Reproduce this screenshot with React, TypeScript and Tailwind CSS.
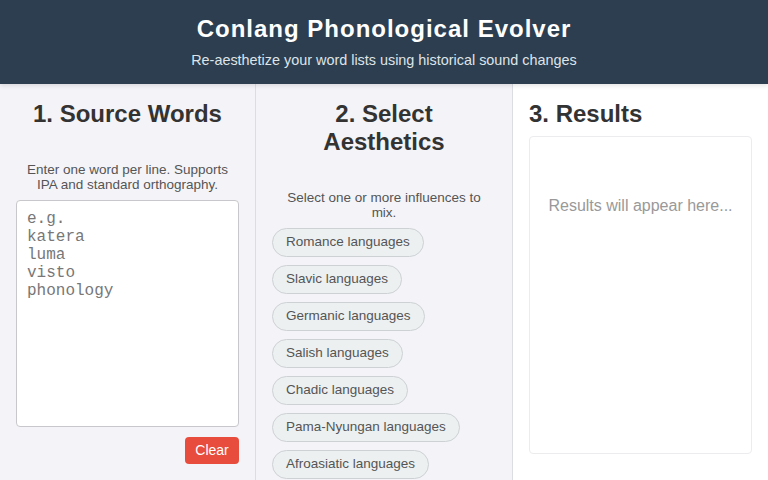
import React, { useState } from 'react';

const influences = [
  'Romance languages',
  'Slavic languages',
  'Germanic languages',
  'Salish languages',
  'Chadic languages',
  'Pama-Nyungan languages',
  'Afroasiatic languages',
];

const App = () => {
  const [words, setWords] = useState('');
  const [picked, setPicked] = useState<string[]>([]);

  const toggle = (name: string) => {
    setPicked((prev) => (prev.includes(name) ? prev.filter((p) => p !== name) : [...prev, name]));
  };

  return (
    <div className="h-[480px] overflow-hidden bg-white font-['Liberation_Sans',Arial,sans-serif] text-[#333]">
      {/* Header */}
      <header className="relative z-10 flex h-[84px] flex-col items-center justify-center bg-[#2c3e50] text-white shadow-[0_2px_4px_rgba(0,0,0,0.1)]">
        <h1 className="text-[24px] font-bold leading-[28px] tracking-[1px]">Conlang Phonological Evolver</h1>
        <p className="mt-[8px] text-[14.4px] leading-[18px] text-[#dfe4e8]">
          Re-aesthetize your word lists using historical sound changes
        </p>
      </header>

      <main className="grid h-[396px] grid-cols-[256px_257px_255px]">
        {/* Column 1 */}
        <section className="flex flex-col border-r border-[#dcdde3] bg-[#f4f4f8] p-4">
          <h2 className="text-center text-[24px] font-bold leading-[28px]">1. Source Words</h2>
          <p className="mt-[34px] px-2 text-center text-[13.5px] leading-[15px] text-[#555]">
            Enter one word per line. Supports IPA and standard orthography.
          </p>
          <textarea
            value={words}
            onChange={(e) => setWords(e.target.value)}
            placeholder={'e.g.\nkatera\nluma\nvisto\nphonology'}
            className="mt-2 h-[227px] w-full resize-none rounded border border-[#c8c8cc] bg-white px-[10px] py-[9px] font-['Liberation_Mono',monospace] text-[16px] leading-[18px] text-[#333] placeholder:text-[#777] focus:outline-none"
          />
          <div className="mt-[10px] flex justify-end">
            <button
              onClick={() => setWords('')}
              className="h-[27px] w-[54px] rounded bg-[#e74c3c] text-[14px] text-white"
            >
              Clear
            </button>
          </div>
        </section>

        {/* Column 2 */}
        <section className="flex flex-col border-r border-[#dcdde3] bg-[#f4f4f8] p-4">
          <h2 className="text-center text-[24px] font-bold leading-[28px]">
            2. Select
            <br />
            Aesthetics
          </h2>
          <p className="mt-[34px] px-2 text-center text-[13.5px] leading-[15px] text-[#555]">
            Select one or more influences to mix.
          </p>
          <div className="mt-2 flex flex-col items-start gap-2">
            {influences.map((name) => (
              <button
                key={name}
                onClick={() => toggle(name)}
                className={`h-[29px] rounded-full border px-[13px] text-[13.5px] ${
                  picked.includes(name)
                    ? 'border-[#3498db] bg-[#3498db] text-white'
                    : 'border-[#cdd1d4] bg-[#ecf0f1] text-[#555]'
                }`}
              >
                {name}
              </button>
            ))}
          </div>
        </section>

        {/* Column 3 */}
        <section className="flex flex-col bg-white p-4">
          <h2 className="text-[24px] font-bold leading-[28px]">3. Results</h2>
          <div className="mt-2 flex h-[318px] justify-center rounded border border-[#ececef] pt-[59px]">
            <span className="text-[16px] leading-[20px] text-[#999]">Results will appear here...</span>
          </div>
        </section>
      </main>
    </div>
  );
};

export default App;
